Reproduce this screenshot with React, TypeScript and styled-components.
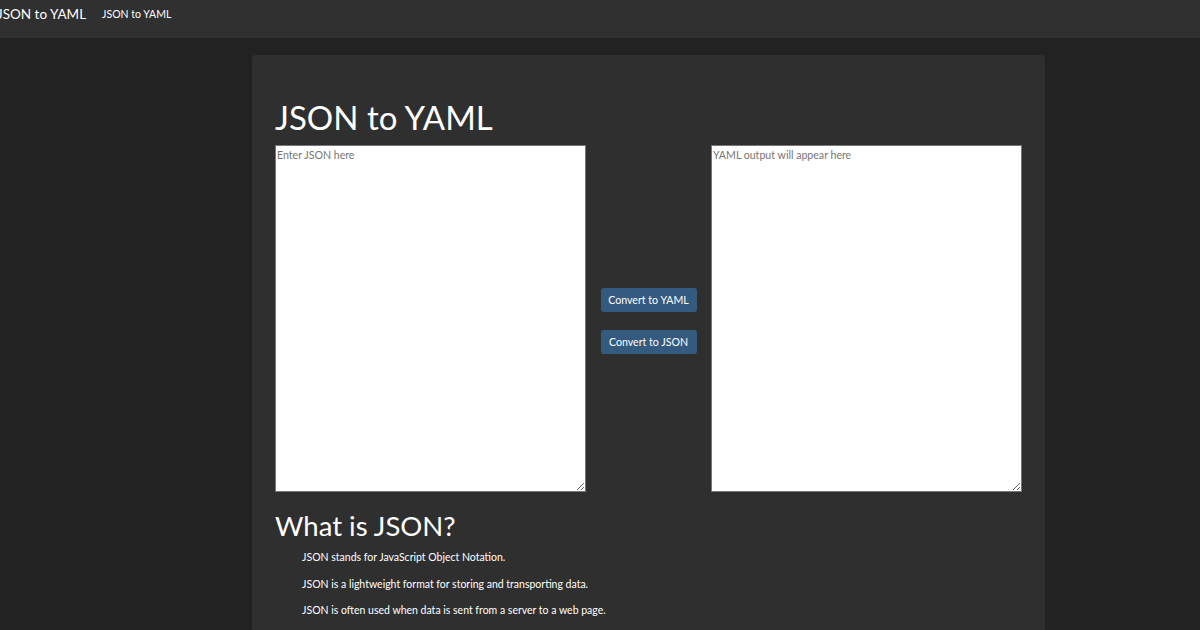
import styled, { createGlobalStyle } from 'styled-components'
import { FC, useState } from 'react'

const GlobalStyle = createGlobalStyle`
	html, body {
		margin: 0;
		padding: 0;
		background: #222222;
		font-family: Lato, "Open Sans", sans-serif;
		color: #ffffff;
	}
`

const NavBar = styled.nav`
	height: 38px;
	background: #303030;
	display: flex;
	align-items: center;
	gap: 16px;
	padding: 0 0 11px 0;
	box-sizing: border-box;
`

const Brand = styled.a`
	font-size: 13.5px;
	color: #ffffff;
	margin-left: -3px;
	text-decoration: none;
`

const NavLink = styled.a`
	font-size: 10.5px;
	color: #ffffff;
	text-decoration: none;
`

const Page = styled.main`
	display: flex;
	padding: 17px 0 0 252px;
`

const Panel = styled.section`
	width: 793px;
	box-sizing: border-box;
	background: #2f2f2f;
	border-radius: 4px;
	padding: 42px 23px 40px;
`

const Title = styled.h1`
	font-size: 33px;
	font-weight: 400;
	line-height: 40px;
	margin: 0 0 8px;
`

const Converter = styled.div`
	display: grid;
	grid-template-columns: 311px 1fr 311px;
	height: 347px;
`

const Box = styled.textarea`
	box-sizing: border-box;
	width: 100%;
	height: 100%;
	margin: 0;
	border: 1px solid #767676;
	background: #ffffff;
	font-family: Lato, "Open Sans", sans-serif;
	font-size: 10.6px;
	padding: 3px 1px;
	color: #222;

	&::placeholder {
		color: #757575;
	}
`

const Actions = styled.div`
	display: flex;
	flex-direction: column;
	align-items: center;
	justify-content: center;
	gap: 18px;
	padding-top: 5px;
`

const Button = styled.button`
	width: 96px;
	height: 24px;
	padding: 0;
	border: none;
	border-radius: 3px;
	background: #345a80;
	color: #ffffff;
	font-family: Lato, "Open Sans", sans-serif;
	font-size: 10.6px;
	white-space: nowrap;
	cursor: pointer;
`

const SubTitle = styled.h2`
	font-size: 27.5px;
	font-weight: 400;
	line-height: 36px;
	margin: 16px 0 0;
`

const Points = styled.div`
	padding-left: 27px;
`

const Point = styled.p`
	font-size: 10.5px;
	line-height: 26.5px;
	margin: 0;
`

const App: FC = () => {
	const [json, setJson] = useState('')
	const [yaml, setYaml] = useState('')

	return (
		<>
			<GlobalStyle />
			<NavBar>
				<Brand href="#">JSON to YAML</Brand>
				<NavLink href="#">JSON to YAML</NavLink>
			</NavBar>
			<Page>
				<Panel>
					<Title>JSON to YAML</Title>
					<Converter>
						<Box
							placeholder="Enter JSON here"
							value={json}
							onChange={e => setJson(e.target.value)}
						/>
						<Actions>
							<Button>Convert to YAML</Button>
							<Button>Convert to JSON</Button>
						</Actions>
						<Box
							placeholder="YAML output will appear here"
							value={yaml}
							onChange={e => setYaml(e.target.value)}
						/>
					</Converter>
					<SubTitle>What is JSON?</SubTitle>
					<Points>
						<Point>JSON stands for JavaScript Object Notation.</Point>
						<Point>JSON is a lightweight format for storing and transporting data.</Point>
						<Point>JSON is often used when data is sent from a server to a web page.</Point>
					</Points>
				</Panel>
			</Page>
		</>
	)
}

export default App
